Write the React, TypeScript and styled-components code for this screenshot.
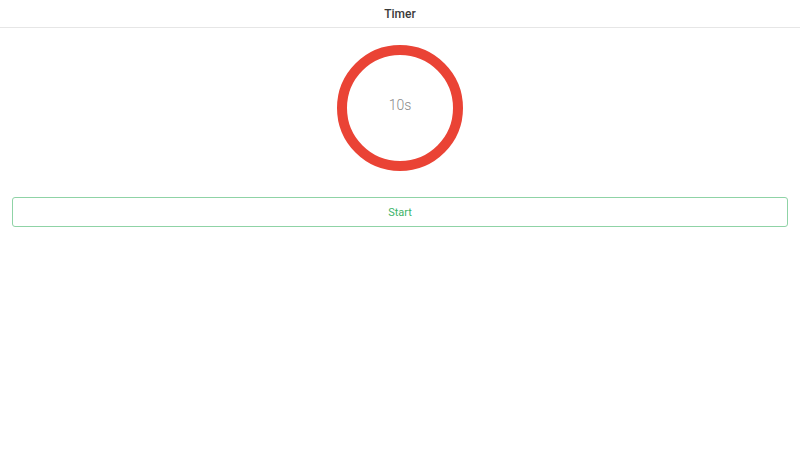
import styled, { createGlobalStyle } from "styled-components";

const GlobalStyle = createGlobalStyle`
  body {
    margin: 0;
    background: #ffffff;
    font-family: Roboto, "Noto Sans", sans-serif;
  }
`;

export default function App() {
  const seconds = 10;
  return (
    <>
      <GlobalStyle />
      <Page>
        <Header>
          <Title>Timer</Title>
        </Header>
        <Body>
          <Dial>
            <Remaining>{seconds}s</Remaining>
          </Dial>
          <StartButton>Start</StartButton>
        </Body>
      </Page>
    </>
  );
}

const Page = styled.div`
  display: flex;
  flex-direction: column;
  width: 800px;
  height: 450px;
`;

const Header = styled.header`
  height: 28px;
  padding-top: 1px;
  display: flex;
  align-items: center;
  justify-content: center;
  border-bottom: 1px solid #e6e6e6;
  box-sizing: border-box;
`;

const Title = styled.h1`
  margin: 0;
  font-size: 12px;
  font-weight: 500;
  color: #3a3a3a;
`;

const Body = styled.main`
  display: flex;
  flex-direction: column;
  align-items: center;
  padding: 17px 12px 0;
  gap: 26px;
`;

const Dial = styled.div`
  width: 126px;
  height: 126px;
  box-sizing: border-box;
  border: 10px solid #ea4335;
  border-radius: 50%;
  display: flex;
  align-items: center;
  justify-content: center;
`;

const Remaining = styled.span`
  font-size: 14px;
  font-weight: 300;
  color: #8a8a8a;
  margin-top: -6px;
`;

const StartButton = styled.button`
  width: 100%;
  height: 30px;
  background: #ffffff;
  border: 1px solid #8fd3a6;
  border-radius: 3px;
  color: #3cb46a;
  font-family: Roboto, "Noto Sans", sans-serif;
  font-size: 11px;
  cursor: pointer;
`;
